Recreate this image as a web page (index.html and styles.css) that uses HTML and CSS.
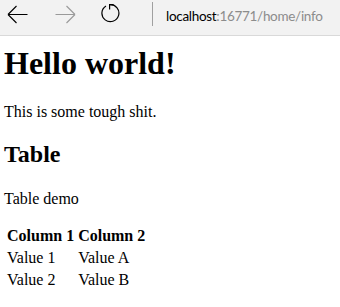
FILE: index.html
```html
<!DOCTYPE html>
<html>
  <head>
    <meta charset="utf-8">
    <meta name="viewport" content="width=device-width, initial-scale=1">
    <title>Info</title>
    <link rel="stylesheet" href="styles.css">
  </head>
  <body>
    <div class="toolbar">
      <svg class="icon back" width="22" height="22" viewBox="0 0 22 22">
        <path d="M1 10.5H20.5M1 10.5L9.5 2M1 10.5L9.5 19" fill="none" stroke="#000" stroke-width="1.1"/>
      </svg>
      <svg class="icon forward" width="22" height="22" viewBox="0 0 22 22">
        <path d="M21 10.5H1.5M21 10.5L12.5 2M21 10.5L12.5 19" fill="none" stroke="#9a9a9a" stroke-width="1.1"/>
      </svg>
      <svg class="icon refresh" width="22" height="22" viewBox="0 0 22 22">
        <path d="M9.8 0.7A8.5 8.5 0 1 1 6 1.9" fill="none" stroke="#000" stroke-width="1.2"/>
        <path d="M9.6 5.5V0.6H13.6" fill="none" stroke="#000" stroke-width="1.2"/>
      </svg>
      <span class="divider"></span>
      <span class="url">localhost<span class="rest">:16771/home/info</span></span>
    </div>
    <div class="page">
      <h1>Hello world!</h1>
      <p>This is some tough shit.</p>
      <h2>Table</h2>
      <p>Table demo</p>
      <table>
        <tr><th>Column 1</th><th>Column 2</th></tr>
        <tr><td>Value 1</td><td>Value A</td></tr>
        <tr><td>Value 2</td><td>Value B</td></tr>
      </table>
    </div>
  </body>
</html>
```
FILE: styles.css
```css
body {
  margin: 0;
  font-family: "Liberation Serif", serif;
  font-size: 16px;
}

.toolbar {
  height: 35px;
  display: flex;
  align-items: flex-start;
  background: #f2f2f2;
  border-bottom: 1px solid #d9d9d9;
  overflow: hidden;
}

.icon {
  margin-top: 4px;
  flex: none;
}

.back {
  margin-left: 7px;
}

.forward {
  margin-left: 25px;
}

.refresh {
  margin-left: 24px;
}

.divider {
  flex: none;
  width: 1px;
  height: 24px;
  margin: 2px 0 0 30px;
  background: #a0a0a0;
}

.url {
  flex: none;
  margin: 7px 0 0 13px;
  font-family: Lato, sans-serif;
  font-size: 13.5px;
  letter-spacing: -0.3px;
  line-height: 18px;
  color: #000;
}

.url .rest {
  color: #8c8c8c;
}

.page {
  padding: 0 4px;
}

h1 {
  font-size: 32px;
  margin: 9px 0 21.44px;
}

h2 {
  font-size: 24px;
  margin: 19.92px 0 22px;
}

table {
  margin-top: 1px;
}
```
